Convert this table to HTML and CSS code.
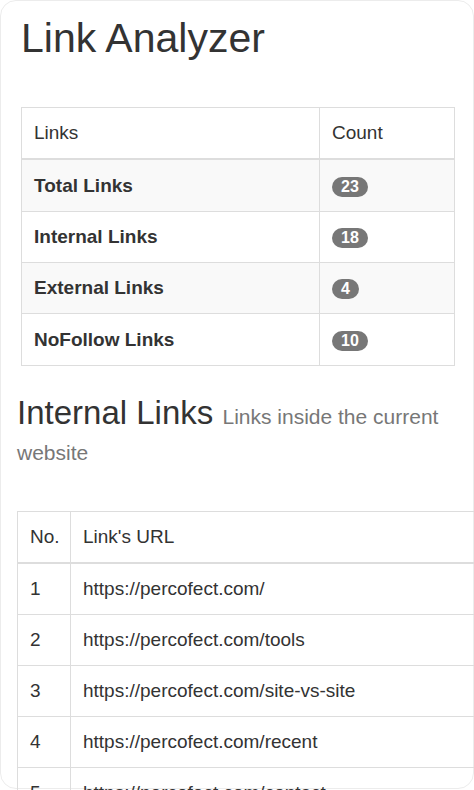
FILE: index.html
```html
<!DOCTYPE html>
<html lang="en">
<head>
    <meta charset="UTF-8">
    <meta name="viewport" content="width=device-width, initial-scale=1.0">
    <title>Link Analyzer</title>
    <link rel="stylesheet" href="styles.css">
</head>
<body>
    <div class="card">
        <h1 class="title">Link Analyzer</h1>

        <table class="table striped summary">
            <thead>
                <tr>
                    <th class="name-col">Links</th>
                    <th>Count</th>
                </tr>
            </thead>
            <tbody>
                <tr>
                    <th>Total Links</th>
                    <td><span class="badge">23</span></td>
                </tr>
                <tr>
                    <th>Internal Links</th>
                    <td><span class="badge">18</span></td>
                </tr>
                <tr>
                    <th>External Links</th>
                    <td><span class="badge">4</span></td>
                </tr>
                <tr>
                    <th>NoFollow Links</th>
                    <td><span class="badge">10</span></td>
                </tr>
            </tbody>
        </table>

        <div class="section">
            <h2 class="section-title">Internal Links <small>Links inside the current website</small></h2>

            <table class="table links">
                <thead>
                    <tr>
                        <th class="no-col">No.</th>
                        <th>Link's URL</th>
                    </tr>
                </thead>
                <tbody>
                    <tr><td>1</td><td>https://percofect.com/</td></tr>
                    <tr><td>2</td><td>https://percofect.com/tools</td></tr>
                    <tr><td>3</td><td>https://percofect.com/site-vs-site</td></tr>
                    <tr><td>4</td><td>https://percofect.com/recent</td></tr>
                    <tr><td>5</td><td>https://percofect.com/contact</td></tr>
                    <tr><td>6</td><td>https://percofect.com/about</td></tr>
                </tbody>
            </table>
        </div>
    </div>
</body>
</html>
```

FILE: styles.css
```css
* {
    margin: 0;
    padding: 0;
    box-sizing: border-box;
}

html, body {
    height: 100%;
    overflow: hidden;
}

body {
    font-family: "Liberation Sans", Arial, sans-serif;
    color: #333;
    background: #fff;
}

.card {
    width: 474px;
    height: 789px;
    border: 1px solid #ececec;
    border-radius: 16px;
    padding: 0 18px 0 20px;
    background: #fff;
}

.title {
    margin-top: 15px;
    font-size: 41px;
    font-weight: 400;
    line-height: 1.1;
    color: #333;
}

.table {
    border-collapse: collapse;
    font-size: 19px;
    line-height: 28px;
}

.table th,
.table td {
    border: 1px solid #ddd;
    padding: 11px 12px;
    text-align: left;
    vertical-align: top;
}

.table thead th {
    font-weight: 400;
    border-bottom: 2px solid #ddd;
}

.summary {
    width: 100%;
    margin-top: 46px;
}

.summary .name-col {
    width: 298px;
}

.summary tbody tr:first-child > *,
.summary tbody tr:last-child > * {
    padding-top: 12px;
}

.summary tbody th {
    font-weight: 700;
}

.striped tbody tr:nth-child(odd) {
    background: #f9f9f9;
}

.badge {
    display: inline-block;
    margin-top: 5px;
    padding: 2px 9px;
    border-radius: 11px;
    background: #777;
    color: #fff;
    font-size: 16px;
    font-weight: 700;
    line-height: 1;
    vertical-align: top;
}

.section {
    margin-left: -4px;
}

.section-title {
    margin-top: 29px;
    font-size: 33px;
    font-weight: 400;
    line-height: 1.1;
    color: #333;
}

.section-title small {
    font-size: 21px;
    color: #777;
}

.links {
    width: 520px;
    margin-top: 43px;
}

.links td:first-child,
.links th:first-child {
    width: 53px;
    max-width: 53px;
}
```
